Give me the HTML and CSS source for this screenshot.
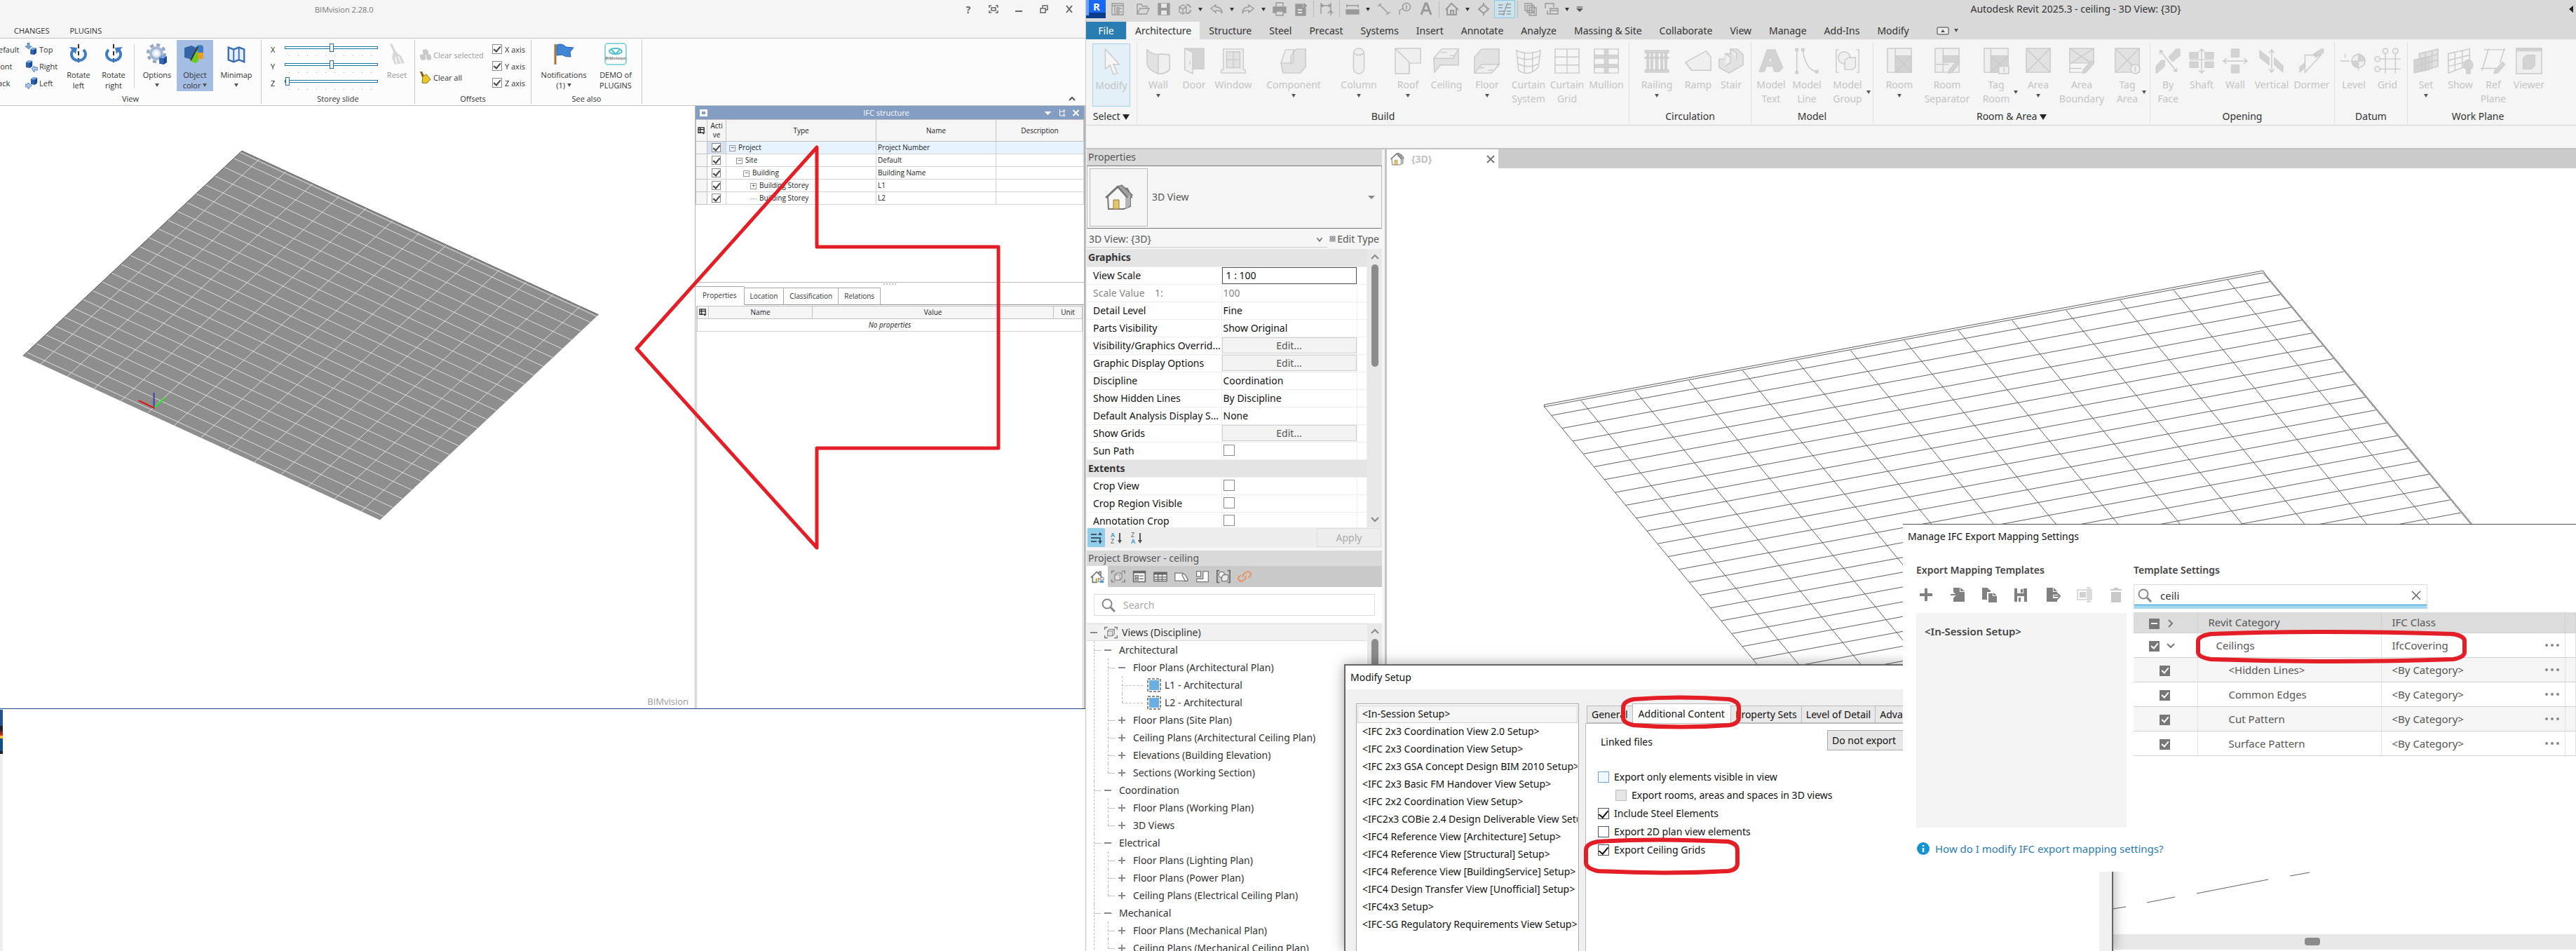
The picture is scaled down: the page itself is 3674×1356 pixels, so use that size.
FILE: index.html
```html
<!DOCTYPE html>
<html lang="en">
<head>
<meta charset="utf-8">
<title>BIMvision and Autodesk Revit</title>
<link rel="stylesheet" href="styles.css">
</head>
<body>
<svg class="sprite" aria-hidden="true">
  <defs>
    <symbol id="house" viewBox="0 0 40 36"><path d="M4 17 18 4l14 2 6 12-2 1v12l-9 4H5z" fill="#f7f7f7" stroke="#777" stroke-width="2"/><path d="M18 3 24 1 39 15l-7 4z" fill="#a0a0a0" stroke="#777" stroke-width="1.5"/><path d="M29 19l7-4v15l-7 5z" fill="#b5b5b5"/><path d="M1 19 18 3l14 16" fill="none" stroke="#777" stroke-width="2.5"/><path d="M12 22h8v13h-8z" fill="#e5c564" stroke="#8b7a45"/></symbol>
    <symbol id="cubeview" viewBox="0 0 28 24"><path d="M1 6V1h6M21 1h6v5M27 18v5h-6M7 23H1v-5" fill="none" stroke="#777" stroke-width="2"/><path d="M7 9l4-4h10v10l-4 4H7z" fill="#e4e4e4" stroke="#777" stroke-width="1.5"/><path d="M7 9h10v10M17 9l4-4" fill="none" stroke="#777"/></symbol>
    <symbol id="magnifier" viewBox="0 0 20 20"><circle cx="8" cy="8" r="6.5" fill="none" stroke="#888" stroke-width="2"/><path d="M13 13l6 6" stroke="#888" stroke-width="3"/></symbol>
    <symbol id="planview" viewBox="0 0 20 20"><path d="M3 3h14v14H3z" fill="#6aafe3"/><path d="M1 1h18v18H1z" fill="none" stroke="#666" stroke-width="1.5" stroke-dasharray="4 2"/></symbol>
    <symbol id="cube" viewBox="0 0 12 14"><path d="M1 4l4-3 6 1v8l-4 3-6-1z" fill="#2f62ad"/><path d="M1 4l4-3 6 1-4 3z" fill="#7aa7e0"/><path d="M7 5l4-3v8l-4 3z" fill="#1e4a8c"/></symbol>
    <symbol id="chooser" viewBox="0 0 12 12"><path d="M1 1h9v8H1zM1 4h9M4 1v8" fill="none" stroke="#222" stroke-width="1.4"/><path d="M6 8h6l-3 4z" fill="#222" stroke="#fff" stroke-width=".5"/></symbol>
  </defs>
</svg>

<main class="desktop">
  <section class="bim" aria-label="BIMvision">
    <header class="bim-title">
      <span class="bim-name">BIMvision 2.28.0</span>
      <div class="win-buttons">
        <button aria-label="Help">?</button>
        <button aria-label="Full screen"><svg viewBox="0 0 14 12"><path d="M1 4V1h3M10 1h3v3M13 8v3h-3M4 11H1V8M4 4h6v4H4z" fill="none" stroke="#666" stroke-width="1.5"/></svg></button>
        <button aria-label="Minimize"><svg viewBox="0 0 14 12"><path d="M2 9h10" stroke="#666" stroke-width="2"/></svg></button>
        <button aria-label="Restore"><svg viewBox="0 0 14 12"><path d="M2 5h7v6H2zM5 4V1h7v6H9" fill="none" stroke="#666" stroke-width="1.5"/></svg></button>
        <button aria-label="Close"><svg viewBox="0 0 14 12"><path d="M3 1l8 10M11 1L3 11" stroke="#666" stroke-width="2"/></svg></button>
      </div>
    </header>
    <nav class="bim-tabs"><a href="#changes">CHANGES</a><a href="#plugins">PLUGINS</a></nav>

    <div class="bim-ribbon">
      <section class="bgroup">
        <div class="bgroup-body view-body">
          <div class="stack clipped"><button>Default</button><button>Front</button><button>Back</button></div>
          <div class="stack">
            <button><svg viewBox="0 0 18 18"><use href="#cube" x="6" y="6" width="11" height="12"/><path d="M3 0h3v5h3L5 9 0 5h3z" fill="#7aa7e0" stroke="#2f62ad" stroke-width=".7"/></svg>Top</button>
            <button><svg viewBox="0 0 18 18"><use href="#cube" x="0" y="0" width="11" height="13"/><path d="M18 11v4h-5v3l-4-5 4-4v2z" fill="#a9c8ee" stroke="#2f62ad" stroke-width=".7"/></svg>Right</button>
            <button><svg viewBox="0 0 18 18"><use href="#cube" x="7" y="0" width="11" height="13"/><path d="M0 11v4h4v3l5-5-5-4v2z" fill="#a9c8ee" stroke="#2f62ad" stroke-width=".7"/></svg>Left</button>
          </div>
          <button class="big"><svg viewBox="0 0 32 32"><path d="M16 2v28" stroke="#333" stroke-width="2" stroke-dasharray="6 4"/><path d="M8 11a10 9 0 1 0 15-1" fill="none" stroke="#3f7cc4" stroke-width="4"/><path d="M3 6l11 1-2 9z" fill="#3f7cc4"/></svg>Rotate<br>left</button>
          <button class="big"><svg viewBox="0 0 32 32"><path d="M16 2v28" stroke="#333" stroke-width="2" stroke-dasharray="6 4"/><path d="M24 11a10 9 0 1 1-15-1" fill="none" stroke="#3f7cc4" stroke-width="4"/><path d="M29 6l-11 1 2 9z" fill="#3f7cc4"/></svg>Rotate<br>right</button>
          <span class="bsep"></span>
          <button class="big wide"><svg viewBox="0 0 32 32"><circle cx="15" cy="15" r="12" fill="none" stroke="#8fa5c0" stroke-width="4" stroke-dasharray="5 4.4"/><circle cx="15" cy="15" r="8" fill="#dfe9f5" stroke="#a3b7d0" stroke-width="4"/><circle cx="15" cy="15" r="3" fill="#fff"/><use href="#cube" x="17" y="17" width="15" height="15"/></svg>Options<i class="caret"></i></button>
          <button class="big active"><svg viewBox="0 0 32 32"><path d="M1 7l10-3 7 3-6 17-11-3z" fill="#3565a8"/><path d="M18 5q5-4 10 0v9H18z" fill="#3f7cc4"/><path d="M18 14h10v8q-5 3-9 0z" fill="#f09a1f"/><path d="M20 10l-11 16 8 3 4-3z" fill="#6ccb1e"/><path d="M20 6L10 25" stroke="#333" stroke-width="2"/></svg>Object<br><span>color <i class="caret"></i></span></button>
          <button class="big wide map"><svg viewBox="0 0 32 32"><path d="M4 7l8 3 8-3 8 3v19l-8-3-8 3-8-3z" fill="#e4eefb" stroke="#3a6db3" stroke-width="2.5"/><path d="M12 10v19M20 7v19" stroke="#3a6db3" stroke-width="2"/></svg>Minimap<i class="caret"></i></button>
        </div>
        <h2>View</h2>
      </section>
      <section class="bgroup">
        <div class="bgroup-body slide-body">
          <div class="sliders">
            <label for="sx">X</label><input id="sx" type="range" value="50">
            <label for="sy">Y</label><input id="sy" type="range" value="50">
            <label for="sz">Z</label><input id="sz" type="range" value="0">
          </div>
          <button class="big dim"><svg viewBox="0 0 32 32"><path d="M6 2l3-1 6 12 8 7 4 9-14 2-4-10 2-8z" fill="#d7d7d7"/><path d="M14 20l2 10M18 19l4 10" stroke="#f4f4f4" stroke-width="2"/></svg>Reset</button>
        </div>
        <h2>Storey slide</h2>
      </section>
      <section class="bgroup">
        <div class="bgroup-body offset-body">
          <div class="stack two">
            <button class="dim"><svg viewBox="0 0 18 18"><path d="M5 2l5-1 3 3v5l-5 1-3-3zM1 9l5-1 3 3v5l-5 1-3-3zM10 9l5-1 2 3v5l-5 1-2-3z" fill="#c9c9c9"/></svg>Clear selected</button>
            <button><svg viewBox="0 0 18 18"><path d="M1 1l3 0 3 6-3 2z" fill="#8a5a1c"/><path d="M5 8l5-3 6 7-6 6-6-1z" fill="#e9c62b" stroke="#8b7410"/></svg>Clear all</button>
          </div>
          <div class="stack axes">
            <label><input type="checkbox" checked>X axis</label>
            <label><input type="checkbox" checked>Y axis</label>
            <label><input type="checkbox" checked>Z axis</label>
          </div>
        </div>
        <h2>Offsets</h2>
      </section>
      <section class="bgroup">
        <div class="bgroup-body also-body">
          <button class="big"><svg viewBox="0 0 32 32"><path d="M4 2v29" stroke="#a8763c" stroke-width="3"/><path d="M6 3q8-3 13 3l11 1-5 6 1 7q-9 0-12-3l-8 1z" fill="#3f86d6" stroke="#2862a5"/></svg>Notifications<br><span>(1) <i class="caret"></i></span></button>
          <button class="big"><svg viewBox="0 0 32 32"><rect x="1" y="1" width="30" height="30" rx="4" fill="#fff" stroke="#67cbd2" stroke-width="1.5"/><ellipse cx="16" cy="12" rx="9" ry="4" fill="none" stroke="#4dbfc8" stroke-width="2"/><path d="M10 10l6 6 6-6" fill="none" stroke="#4dbfc8" stroke-width="2"/><text x="16" y="24" text-anchor="middle" font-size="6" font-weight="700" fill="#777">BIMvision</text></svg>DEMO of<br>PLUGINS</button>
        </div>
        <h2>See also</h2>
      </section>
      <button class="collapse" aria-label="Collapse ribbon"><svg viewBox="0 0 10 8"><path d="M1 6l4-4 4 4" fill="none" stroke="#555" stroke-width="2"/></svg></button>
    </div>

    <div class="bim-main">
      <div class="viewport">
        <svg viewBox="0 151 993 861" preserveAspectRatio="xMinYMin meet" role="img" aria-label="Ceiling model">
          <defs>
            <path id="ra" d="M0 0l509.7 234.2"/>
            <g id="ra4"><use href="#ra"/><use href="#ra" x="-13.44" y="12.6"/><use href="#ra" x="-26.88" y="25.2"/><use href="#ra" x="-40.32" y="37.8"/></g>
            <path id="rb" d="M0 0l-312.9 293.1"/>
            <g id="rb4"><use href="#rb"/><use href="#rb" x="38.2" y="17.5"/><use href="#rb" x="76.4" y="35"/><use href="#rb" x="114.6" y="52.5"/></g>
          </defs>
          <path d="M345.6 215.2L855.3 449.4 543 742.6 32.7 508.3z" fill="#8e8e8e"/>
          <g stroke="#dedede" stroke-width="1">
            <use href="#ra" x="343" y="217.5"/>
            <use href="#ra4" x="334" y="226"/><use href="#ra4" x="280.2" y="276.4"/><use href="#ra4" x="226.5" y="326.8"/><use href="#ra4" x="172.7" y="377.2"/><use href="#ra4" x="119" y="427.6"/>
            <use href="#ra" x="65.2" y="478"/><use href="#ra" x="51.8" y="490.6"/><use href="#ra" x="38.3" y="503.2"/>
            <use href="#rb4" x="370.8" y="227"/><use href="#rb4" x="523.6" y="297"/><use href="#rb4" x="676.4" y="367"/><use href="#rb" x="829.2" y="437"/>
          </g>
          <path d="M32.7 508.3L345.6 215.2 855.3 449.4" fill="none" stroke="#555" stroke-width="1"/>
          <path d="M220 582v-21" stroke="#3d3db0" stroke-width="2"/><path d="M220 582l16-14" stroke="#1fe01f" stroke-width="2"/><path d="M221 583l-23-11" stroke="#e01010" stroke-width="2"/>
        </svg>
        <span class="watermark">BIMvision</span>
      </div>
      <aside class="ifc">
        <header class="ifc-head">
          <svg viewBox="0 0 11 10"><path d="M1.5 1.5h8v7h-8z" fill="none" stroke="#fff" stroke-width="3"/></svg>
          <h2>IFC structure</h2>
          <div><svg viewBox="0 0 10 10"><path d="M0 3h10L5 8z" fill="#fff"/></svg><svg viewBox="0 0 10 10"><path d="M2 0v9h5M2 3h5M7 1v3h2V1zM7 7v3h2V7z" fill="none" stroke="#fff"/></svg><svg viewBox="0 0 10 10"><path d="M1 1l8 8M9 1L1 9" stroke="#fff" stroke-width="2"/></svg></div>
        </header>
        <div class="ifc-tree">
          <table class="grid">
            <colgroup><col class="c-pick"><col class="c-act"><col class="c-type"><col class="c-name"><col></colgroup>
            <thead><tr><th><svg class="chooser"><use href="#chooser"/></svg></th><th>Acti<br>ve</th><th>Type</th><th>Name</th><th>Description</th></tr></thead>
            <tbody>
              <tr class="sel"><th></th><td><input type="checkbox" checked aria-label="Project active"></td><td class="n0"><b class="box">−</b>Project</td><td>Project Number</td><td></td></tr>
              <tr><th></th><td><input type="checkbox" checked aria-label="Site active"></td><td class="n1"><b class="box">−</b>Site</td><td>Default</td><td></td></tr>
              <tr><th></th><td><input type="checkbox" checked aria-label="Building active"></td><td class="n2"><b class="box">−</b>Building</td><td>Building Name</td><td></td></tr>
              <tr><th></th><td><input type="checkbox" checked aria-label="Storey L1 active"></td><td class="n3"><b class="box">+</b>Building Storey</td><td>L1</td><td></td></tr>
              <tr><th></th><td><input type="checkbox" checked aria-label="Storey L2 active"></td><td class="n3"><b class="box none"></b>Building Storey</td><td>L2</td><td></td></tr>
            </tbody>
          </table>
        </div>
        <div class="splitter"><i></i><i></i><i></i><i></i><i></i></div>
        <nav class="ptabs"><button class="on">Properties</button><button>Location</button><button>Classification</button><button>Relations</button></nav>
        <div class="ifc-props">
          <table class="grid">
            <colgroup><col class="c-pick"><col class="c-pname"><col><col class="c-unit"></colgroup>
            <thead><tr><th><svg class="chooser"><use href="#chooser"/></svg></th><th>Name</th><th>Value</th><th>Unit</th></tr></thead>
            <tbody><tr><td colspan="4" class="empty"><em>No properties</em></td></tr></tbody>
          </table>
        </div>
      </aside>
    </div>
    <div class="behind"><i class="s1"></i><i class="s2"></i><i class="s3"></i><i class="s4"></i></div>
  </section>

  <section class="revit" aria-label="Autodesk Revit">
    <header class="qat">
      <svg class="logo" viewBox="0 0 28 26"><path d="M0 0h28v20H0z" fill="#1668f5"/><path d="M0 20l4-2h24v8H0z" fill="#0a3c8c"/><path d="M0 0h4v22H0z" fill="#6aa0ff"/><text x="15" y="15" text-anchor="middle" font-size="15" font-weight="700" fill="#fff">R</text></svg>
      <button aria-label="Home"><svg viewBox="0 0 20 20"><path d="M2 2h16v16H2zM2 5h16M6 5v13M9 8h3v3H9zM9 13h3v3H9zM13 9h3M13 14h3"/></svg></button>
      <span class="gap"></span>
      <button aria-label="Open"><svg viewBox="0 0 20 20"><path d="M2 17V3h6l2 3h6v3M2 17l4-8h13l-4 8z"/></svg></button>
      <button aria-label="Save"><svg viewBox="0 0 20 20"><path class="f" d="M2 2h16v16H2z"/><path class="w" d="M6 2h8v6H6zM6 12h8v6H6z"/></svg></button>
      <button aria-label="Synchronize"><svg viewBox="0 0 20 20"><path d="M2 7l5-3 5 3v7l-5 3-5-3zM2 7l5 3 5-3M7 10v7"/><path d="M12 4a5 5 0 0 1 6 4M18 11a5 5 0 0 1-6 5" stroke-width="2"/></svg></button>
      <i class="caret"></i>
      <button aria-label="Undo"><svg viewBox="0 0 20 20"><path d="M9 4L2 9l7 6v-3q7-1 9 4 0-9-9-9z"/></svg></button>
      <i class="caret"></i>
      <button aria-label="Redo"><svg viewBox="0 0 20 20"><path d="M11 4l7 5-7 6v-3q-7-1-9 4 0-9 9-9z"/></svg></button>
      <i class="caret"></i>
      <button aria-label="Print"><svg viewBox="0 0 20 20"><path d="M5 7V1h10v6M5 13h10v6H5z"/><path class="f" d="M1 7h18v8h-3v-3H4v3H1z"/></svg></button>
      <button aria-label="Export"><svg viewBox="0 0 20 20"><path class="f" d="M3 3h9v5h5v11H3z"/><path d="M9 5h8M14 2l4 3-4 3" stroke-width="2"/><path class="w" d="M6 10h6v2H6zM6 14h6v2H6z"/></svg></button>
      <span class="qsep"></span>
      <button aria-label="Switch"><svg viewBox="0 0 20 20"><path d="M2 1v16M16 1v18M2 5h14M5 3L2 5l3 2M13 3l3 2-3 2M12 16l4-4 3 4"/></svg></button>
      <span class="qsep"></span>
      <button aria-label="Measure"><svg viewBox="0 0 20 20"><path class="f" d="M1 11h18v6H1z"/><path d="M2 3v5M18 3v5M2 5h16"/></svg></button>
      <i class="caret"></i>
      <button aria-label="Aligned dimension"><svg viewBox="0 0 20 20"><path d="M3 3l13 13M1 6l5-4M13 18l6-4"/></svg></button>
      <button aria-label="Tag by category"><svg viewBox="0 0 20 20"><circle cx="12" cy="7" r="5.5"/><path d="M12 4v6M7 9l-5 3M2 11v7"/></svg></button>
      <button aria-label="Text"><svg viewBox="0 0 20 20"><path class="heavy" d="M3 18L9 2h2l6 16M5 12h10"/></svg></button>
      <span class="qsep"></span>
      <button aria-label="Default 3D view"><svg viewBox="0 0 20 20"><path d="M3 9v9h13V9M1 11l8-9 10 9M8 18v-6h4v6" stroke-width="2"/></svg></button>
      <i class="caret"></i>
      <button aria-label="Section"><svg viewBox="0 0 20 20"><path d="M10 1v4M10 15v4M3 10l7-6 7 6-7 6z" stroke-width="2"/></svg></button>
      <button class="lit" aria-label="Thin lines"><svg viewBox="0 0 20 20"><path d="M1 4h7M1 8h6M1 13h8M1 17h9M13 3h6M11 8h8M13 13h6M13 17h6"/><path d="M14 1L8 19"/></svg></button>
      <span class="qsep"></span>
      <button aria-label="Close inactive"><svg viewBox="0 0 20 20"><path d="M2 2h10v10H2zM5 5h10v10H5zM8 8h10v11H8zM10 11l6 6M16 11l-6 6"/></svg></button>
      <button aria-label="Switch windows"><svg viewBox="0 0 20 20"><path d="M1 9V2h12v5M8 9h11v8H8zM8 12h11M4 12v5h3"/></svg></button>
      <i class="caret"></i>
      <button class="thin" aria-label="Customize"><svg viewBox="0 0 20 20"><path d="M3 5h14" stroke-width="2"/><path class="f" d="M3 9h14l-7 7z"/></svg></button>
      <h1>Autodesk Revit 2025.3 - ceiling - 3D View: {3D}</h1>
      <svg class="tri" viewBox="0 0 6 10"><path d="M6 0v10L0 5z" fill="#222"/></svg>
    </header>
    <nav class="rtabs">
      <button class="file">File</button><button class="on">Architecture</button><button>Structure</button><button>Steel</button><button>Precast</button><button>Systems</button><button>Insert</button><button>Annotate</button><button>Analyze</button><button>Massing &amp; Site</button><button>Collaborate</button><button>View</button><button>Manage</button><button>Add-Ins</button><button>Modify</button>
      <button class="cycle" aria-label="Minimize ribbon"><svg viewBox="0 0 18 12"><rect x="1" y="1" width="16" height="10" rx="2" fill="#eee" stroke="#777" stroke-width="1.5"/><path d="M6 8l3-4 3 4z" fill="#555"/></svg><i class="caret"></i></button>
    </nav>
    <div class="ribbon">
      <section class="rgroup g-select"><div class="tools"><button class="tool modify"><svg viewBox="0 0 40 40"><path d="M11 1v30l7-6 5 14 6-2-6-13h9z" fill="#f6f6f6"/></svg>Modify</button></div><h2>Select <i class="caret dark"></i></h2></section>
      <section class="rgroup g-build"><div class="tools">
        <button class="tool"><svg viewBox="0 0 40 40"><path d="M3 3q8 8 17 7 9-1 17 1v22q-8 7-17 6Q5 34 3 24z"/><path class="l" d="M20 10q9-1 17 1v22q-8 7-17 6z"/></svg>Wall<i class="caret"></i></button>
        <button class="tool"><svg viewBox="0 0 40 40"><path class="s" d="M6 1h29v31H17z"/><path class="l" d="M6 1l12 6v32L6 33z"/><path class="n" d="M14 20v5"/></svg>Door</button>
        <button class="tool"><svg viewBox="0 0 40 40"><path class="l" d="M5 2h30v31h3v5H2v-5h3z"/><path d="M10 6h20v24H10zM20 6v24M10 18h20"/></svg>Window</button>
        <button class="tool"><svg viewBox="0 0 40 40"><path class="l" d="M8 3h12l-4 20H1z"/><path d="M1 23h15V12l8-10h14v27l-8 9H4z"/><path class="n" d="M20 3v18l-4 4"/></svg>Component<i class="caret"></i></button>
        <button class="tool"><svg viewBox="0 0 40 40"><rect class="l" x="12" y="1" width="16" height="38" rx="8"/><path class="n" d="M12 8q8 6 16 0"/></svg>Column<i class="caret"></i></button>
        <button class="tool"><svg viewBox="0 0 40 40"><path class="l" d="M1 1h38v22H22v16H1z"/><path class="n" d="M1 1l22 22M22 23v16"/></svg>Roof<i class="caret"></i></button>
        <button class="tool"><svg viewBox="0 0 40 40"><path d="M1 16L13 2h25v24H11L2 37z"/><path class="l" d="M1 16L13 2h25l-8 14zM11 7h10M25 12h8"/></svg>Ceiling</button>
        <button class="tool"><svg viewBox="0 0 40 40"><path d="M1 14L12 2h26v24L26 38H1z"/><path class="l" d="M1 38l11-13h26L27 38zM8 30h8M22 34h7"/></svg>Floor<i class="caret"></i></button>
        <button class="tool"><svg viewBox="0 0 40 40"><path class="n" d="M2 4q17 8 36 0l-3 25q-15 16-30 5zM3 14q17 8 34-2M4 24q16 8 32 0M14 7v31M26 7v29"/></svg>Curtain<br>System</button>
        <button class="tool"><svg viewBox="0 0 40 40"><path class="n" d="M2 2h36v36H2zM2 14h36M2 26h36M20 2v36"/></svg>Curtain<br>Grid</button>
        <button class="tool"><svg viewBox="0 0 40 40"><path class="n" d="M2 2h36v36H2z"/><path class="s" d="M2 11h36v5H2zM2 25h36v5H2zM17 2h6v36h-6z"/></svg>Mullion</button>
      </div><h2>Build</h2></section>
      <section class="rgroup g-circ"><div class="tools">
        <button class="tool"><svg viewBox="0 0 40 40"><path class="s" d="M2 4h36v4H2zM2 33h36v4H2zM2 14h36v2H2zM5 8h3v25H5zM11 8h3v25h-3zM18 8h4v25h-4zM26 8h3v25h-3zM32 8h3v25h-3z"/></svg>Railing<i class="caret"></i></button>
        <button class="tool"><svg viewBox="0 0 40 40"><path class="l" d="M1 22L32 5l7 9v20H10z"/><path class="n" d="M1 22l9 12"/></svg>Ramp</button>
        <button class="tool"><svg viewBox="0 0 40 40"><path d="M2 17h9v-8h8V2h10l9 8v16L17 38 2 30z"/><path class="l" d="M11 9l8 5v8l-8 6M19 2l9 6v10"/></svg>Stair</button>
      </div><h2>Circulation</h2></section>
      <section class="rgroup g-model"><div class="tools">
        <button class="tool"><svg viewBox="0 0 40 40"><path class="s" d="M2 36L14 3h12l12 27-6 6h-7l-3-8h-9l-3 8zM16 21h5l-2-8z"/></svg>Model<br>Text</button>
        <button class="tool"><svg viewBox="0 0 40 40"><path class="n" d="M5 4v32M14 4q4 28 20 32"/><path class="s" d="M3 1h4v4H3zM3 35h4v4H3zM12 1h4v4h-4zM33 34h4v4h-4z"/></svg>Model<br>Line</button>
        <button class="tool"><svg viewBox="0 0 40 40"><path class="n" d="M7 3H3v34h4M33 3h4v34h-4"/><circle class="l" cx="15" cy="15" r="9"/><path class="l" d="M16 19l5-4h11v14l-5 4H16z"/></svg><span class="side">Model<br>Group<i class="caret"></i></span></button>
      </div><h2>Model</h2></section>
      <section class="rgroup g-room"><div class="tools">
        <button class="tool"><svg viewBox="0 0 40 40"><path class="l" d="M2 1h36v36H2z"/><path class="s" d="M14 12h24v25H14z"/><path class="n" d="M14 1v36M14 12l24 25M38 12L14 37"/></svg>Room<i class="caret"></i></button>
        <button class="tool"><svg viewBox="0 0 40 40"><path class="l" d="M2 1h36v36H2z"/><path class="s" d="M14 12h24v10H14zM23 33l12-14 4 4-11 14-6 2z"/><path class="n" d="M14 1v36M2 25h20"/></svg>Room<br>Separator</button>
        <button class="tool"><svg viewBox="0 0 40 40"><path class="l" d="M2 1h36v36H2z"/><path class="s" d="M12 12h26v25H12z"/><path class="n" d="M12 1v36M12 12l26 25M38 12L12 37"/><path class="l" d="M24 28h15v11H24z"/><path class="n" d="M32 30v7"/></svg><span class="side">Tag<br>Room<i class="caret"></i></span></button>
        <button class="tool"><svg viewBox="0 0 40 40"><path d="M2 1h36v36H2zM2 1l36 36M38 1L2 37"/></svg>Area<i class="caret"></i></button>
        <button class="tool"><svg viewBox="0 0 40 40"><path d="M2 1h36v22H2zM2 1l36 25M38 1L2 25"/><path class="n" d="M2 25v12h18M2 31h18"/><path class="s" d="M22 33l13-14 4 4-12 14-6 2z"/></svg>Area<br>Boundary</button>
        <button class="tool"><svg viewBox="0 0 40 40"><path d="M2 1h36v36H2zM2 1l36 36M38 1L2 37"/><circle class="l" cx="32" cy="32" r="7"/><path class="n" d="M32 28v8"/></svg><span class="side">Tag<br>Area<i class="caret"></i></span></button>
      </div><h2>Room &amp; Area <i class="caret dark"></i></h2></section>
      <section class="rgroup g-open"><div class="tools">
        <button class="tool"><svg viewBox="0 0 40 40"><path class="s" d="M21 14L32 2h6v10L27 21zM2 28l8-9h5v9L4 38H2z"/><path class="n" d="M8 4l25 32M8 10V4l5 2M33 30v6l-5-2"/></svg>By<br>Face</button>
        <button class="tool"><svg viewBox="0 0 40 40"><path class="s" d="M2 7h13v9H2zM25 7h13v9H25zM2 21h13v9H2zM25 21h13v9H25z"/><path class="n" d="M20 2v36M16 6l4-4 4 4M16 34l4 4 4-4M2 18h36"/></svg>Shaft</button>
        <button class="tool"><svg viewBox="0 0 40 40"><path class="s" d="M14 2h12v12H14zM14 26h12v12H14z"/><path class="n" d="M2 20h36M7 16l-5 4 5 4M33 16l5 4-5 4"/></svg>Wall</button>
        <button class="tool"><svg viewBox="0 0 40 40"><path class="s" d="M2 4l14 11v11L2 15zM24 15l13 12v10L24 26z"/><path class="n" d="M20 3v34M16 8l4-5 4 5M16 32l4 5 4-5"/></svg>Vertical</button>
        <button class="tool"><svg viewBox="0 0 40 40"><path class="s" d="M22 10L34 2h4v5L26 15zM2 37v-8l7-6v8z"/><path class="n" d="M10 11h24L10 37zM10 11v20"/></svg>Dormer</button>
      </div><h2>Opening</h2></section>
      <section class="rgroup g-datum"><div class="tools">
        <button class="tool"><svg viewBox="0 0 40 40"><path class="n" d="M0 20h14M7 9v6M27 8v26"/><circle class="l" cx="27" cy="20" r="10"/><path class="s" d="M27 10a10 10 0 0 1 10 10H27zM27 20v10a10 10 0 0 1-10-10z"/></svg>Level</button>
        <button class="tool"><svg viewBox="0 0 40 40"><path class="n" d="M17 9v30M32 9v30M8 17h32M8 32h32"/><circle class="l" cx="17" cy="5" r="4"/><circle class="l" cx="32" cy="5" r="4"/><circle class="l" cx="5" cy="17" r="4"/><circle class="l" cx="5" cy="32" r="4"/></svg>Grid</button>
      </div><h2>Datum</h2></section>
      <section class="rgroup g-plane"><div class="tools">
        <button class="tool"><svg viewBox="0 0 40 40"><path d="M10 9l28-7v26l-28 7z"/><path class="s" d="M2 18l24-5v20L2 38z"/><path class="n" d="M10 17l28-7M10 26l28-8M19 7v27M29 5v27M2 28l24-6M14 16v20"/></svg>Set<i class="caret"></i></button>
        <button class="tool"><svg viewBox="0 0 40 40"><path class="n" d="M2 9l32-7v24L2 38zM2 19l32-8M2 28l24-6M12 7v27M23 4v26"/><ellipse class="s" cx="32" cy="26" rx="7" ry="8"/><path class="s" d="M29 34h6v5h-6z"/></svg>Show</button>
        <button class="tool"><svg viewBox="0 0 40 40"><path class="n" d="M6 3h32M1 31h24M13 1L3 35M37 1l-7 22"/><path class="s" d="M22 34l12-13 4 4-11 13-6 1z"/></svg>Ref<br>Plane</button>
        <button class="tool"><svg viewBox="0 0 40 40"><path class="l" d="M1 1h38v38H1z"/><path class="s" d="M1 1h38v4H1zM11 16l5-5h13v16l-5 5H11z"/></svg>Viewer</button>
      </div><h2>Work Plane</h2></section>
    </div>
    <div class="optionsbar"></div>

    <div class="workspace">
      <aside class="dock">
        <h2 class="dock-title">Properties</h2>
        <div class="typebox"><div class="thumb"><svg><use href="#house"/></svg></div><span>3D View</span><i class="caret"></i></div>
        <div class="instance"><div>3D View: {3D}<svg viewBox="0 0 8 6"><path d="M1 1l3 4 3-4" fill="none" stroke="#777" stroke-width="1.5"/></svg></div><button><svg viewBox="0 0 9 9"><path d="M1 1h3v3H1zM5 1h3v3H5zM1 5h3v3H1zM5 5h3v3H5z" fill="#dce9f2" stroke="#777"/></svg>Edit Type</button></div>
        <div class="prop-list">
          <table class="props">
            <colgroup><col class="p-name"><col class="p-val"><col></colgroup>
            <tbody>
              <tr class="cat"><th colspan="3">Graphics</th></tr>
              <tr><th><label for="vs">View Scale</label></th><td class="flush"><input id="vs" type="text" value="1 : 100"></td><td></td></tr>
              <tr class="off"><th>Scale Value &nbsp;&nbsp; 1:</th><td>100</td><td></td></tr>
              <tr><th>Detail Level</th><td>Fine</td><td></td></tr>
              <tr><th>Parts Visibility</th><td>Show Original</td><td></td></tr>
              <tr><th>Visibility/Graphics Overrid...</th><td class="flush"><button>Edit...</button></td><td></td></tr>
              <tr><th>Graphic Display Options</th><td class="flush"><button>Edit...</button></td><td></td></tr>
              <tr><th>Discipline</th><td>Coordination</td><td></td></tr>
              <tr><th>Show Hidden Lines</th><td>By Discipline</td><td></td></tr>
              <tr><th>Default Analysis Display S...</th><td>None</td><td></td></tr>
              <tr><th>Show Grids</th><td class="flush"><button>Edit...</button></td><td></td></tr>
              <tr><th><label for="sun">Sun Path</label></th><td><input id="sun" type="checkbox"></td><td></td></tr>
              <tr class="cat"><th colspan="3">Extents</th></tr>
              <tr><th><label for="cv">Crop View</label></th><td><input id="cv" type="checkbox"></td><td></td></tr>
              <tr><th><label for="cr">Crop Region Visible</label></th><td><input id="cr" type="checkbox"></td><td></td></tr>
              <tr><th><label for="ac">Annotation Crop</label></th><td><input id="ac" type="checkbox"></td><td></td></tr>
            </tbody>
          </table>
          <div class="vbar"><svg viewBox="0 0 12 8"><path d="M1 7l5-5 5 5" fill="none" stroke="#888" stroke-width="2"/></svg><i></i><svg class="down" viewBox="0 0 12 8"><path d="M1 1l5 5 5-5" fill="none" stroke="#888" stroke-width="2"/></svg></div>
        </div>
        <div class="dock-foot">
          <button class="lit" aria-label="Sort by group"><svg viewBox="0 0 18 18"><path d="M1 4h8M1 9h12M1 14h8M14 17V8" fill="none" stroke="#456" stroke-width="2"/><path d="M11 5l3-4 3 4zM11 13l3 4 3-4z" fill="#345"/></svg></button>
          <button aria-label="Sort A to Z"><svg viewBox="0 0 18 18"><text x="0" y="8" font-size="9" font-weight="700" fill="#4a9fd8">A</text><text x="0" y="17" font-size="9" fill="#666">Z</text><path d="M13 2v12" stroke="#555" stroke-width="2"/><path d="M10 12h6l-3 5z" fill="#555"/></svg></button>
          <button aria-label="Sort Z to A"><svg viewBox="0 0 18 18"><text x="0" y="8" font-size="9" fill="#666">Z</text><text x="0" y="17" font-size="9" font-weight="700" fill="#4a9fd8">A</text><path d="M13 2v12" stroke="#555" stroke-width="2"/><path d="M10 12h6l-3 5z" fill="#555"/></svg></button>
          <button class="apply" disabled>Apply</button>
        </div>
        <h2 class="dock-title second">Project Browser - ceiling</h2>
        <div class="browser-tools">
          <button class="on" aria-label="All"><svg viewBox="0 0 24 22"><path d="M4 11v10h8M1 13L11 3l9 9M15 6V3h3v6" fill="none" stroke="#777" stroke-width="2"/><path d="M9 21v-7h3v7z" fill="#c9a94e"/><path d="M14 13v8M14 15h4M14 20h4" stroke="#666"/><path d="M17 13h6v4h-6z" fill="#eee" stroke="#777"/><path d="M17 18h6v4h-6z" fill="#4a9fd8"/></svg></button>
          <button aria-label="Views"><svg viewBox="0 0 28 24"><use href="#cubeview"/></svg></button>
          <button aria-label="Legends"><svg viewBox="0 0 24 22"><path d="M2 2h20v18H2z" fill="#fff" stroke="#666" stroke-width="2"/><path d="M2 4h20" stroke="#666" stroke-width="3"/><path d="M5 9h5v3H5zM5 14h5v3H5zM12 10h7M12 15h7" fill="none" stroke="#666" stroke-width="1.5"/></svg></button>
          <button aria-label="Schedules"><svg viewBox="0 0 24 22"><path d="M1 4h22v15H1z" fill="#f0f0f0"/><path d="M1 4h22v4H1z" fill="#666"/><path d="M1 4h22v15H1zM1 12h22M1 16h22M8 4v15M15 4v15" fill="none" stroke="#666" stroke-width="1.5"/></svg></button>
          <button aria-label="Sheets"><svg viewBox="0 0 24 22"><path d="M1 18V5h13l9 12-1 2z" fill="#fff" stroke="#777" stroke-width="1.5"/><path d="M13 8q3-3 5 0l5 8q-1 4-5 2z" fill="#fff" stroke="#777" stroke-width="1.5"/></svg></button>
          <button aria-label="Families"><svg viewBox="0 0 24 22"><path d="M2 2h7v9H2zM13 2h9v18H2v-5h11z" fill="#fff" stroke="#777" stroke-width="1.5"/></svg></button>
          <button aria-label="Groups"><svg viewBox="0 0 24 22"><path d="M5 1H1v20h4M19 1h4v20h-4" fill="none" stroke="#666" stroke-width="2"/><circle cx="9" cy="8" r="5" fill="#fff" stroke="#777" stroke-width="1.5"/><path d="M9 11l3-3h8v8l-3 3H9z" fill="#e8e8e8" stroke="#777" stroke-width="1.5"/></svg></button>
          <button aria-label="Links"><svg viewBox="0 0 24 22"><path d="M10 12q-2-4 2-6l4-3q4-1 6 2t-1 6l-3 2M13 10q3 4-1 6l-4 3q-4 1-6-2t1-6l3-2" fill="none" stroke="#ec8b4e" stroke-width="2"/></svg></button>
        </div>
        <label class="browser-search"><svg><use href="#magnifier"/></svg><input type="search" placeholder="Search" aria-label="Search the project browser"></label>
        <div class="browser">
          <div class="tree">
            <div class="root"><b class="minus"></b><svg><use href="#cubeview"/></svg>Views (Discipline)</div>
            <ul>
              <li><p><b class="minus"></b>Architectural</p>
                <ul>
                  <li><p><b class="minus"></b>Floor Plans (Architectural Plan)</p>
                    <ul class="leafs"><li><p><svg><use href="#planview"/></svg>L1 - Architectural</p></li><li><p><svg><use href="#planview"/></svg>L2 - Architectural</p></li></ul></li>
                  <li><p><b class="plus"></b>Floor Plans (Site Plan)</p></li>
                  <li><p><b class="plus"></b>Ceiling Plans (Architectural Ceiling Plan)</p></li>
                  <li><p><b class="plus"></b>Elevations (Building Elevation)</p></li>
                  <li><p><b class="plus"></b>Sections (Working Section)</p></li>
                </ul></li>
              <li><p><b class="minus"></b>Coordination</p>
                <ul><li><p><b class="plus"></b>Floor Plans (Working Plan)</p></li><li><p><b class="plus"></b>3D Views</p></li></ul></li>
              <li><p><b class="minus"></b>Electrical</p>
                <ul><li><p><b class="plus"></b>Floor Plans (Lighting Plan)</p></li><li><p><b class="plus"></b>Floor Plans (Power Plan)</p></li><li><p><b class="plus"></b>Ceiling Plans (Electrical Ceiling Plan)</p></li></ul></li>
              <li><p><b class="minus"></b>Mechanical</p>
                <ul><li><p><b class="plus"></b>Floor Plans (Mechanical Plan)</p></li><li><p><b class="plus"></b>Ceiling Plans (Mechanical Ceiling Plan)</p></li></ul></li>
            </ul>
          </div>
          <div class="vbar"><svg viewBox="0 0 12 8"><path d="M1 7l5-5 5 5" fill="none" stroke="#888" stroke-width="2"/></svg><i></i></div>
        </div>
      </aside>

      <div class="canvas">
        <div class="viewtabs"><div class="viewtab"><svg><use href="#house"/></svg><span>{3D}</span><button aria-label="Close view"><svg viewBox="0 0 12 12"><path d="M1 1l10 10M11 1L1 11" stroke="#777" stroke-width="2"/></svg></button></div></div>
        <svg class="scene" viewBox="1978 240 1696 1092" preserveAspectRatio="xMinYMin meet" role="img" aria-label="Ceiling grid in 3D">
          <defs>
            <path id="ca" d="M0 0l1024.3-190.6"/>
            <g id="ca4"><use href="#ca"/><use href="#ca" x="15.12" y="18.3"/><use href="#ca" x="30.24" y="36.6"/><use href="#ca" x="45.36" y="54.9"/></g>
            <path id="cb" d="M0 0l396 480"/>
            <g id="cb4"><use href="#cb"/><use href="#cb" x="76.85" y="-14.33"/><use href="#cb" x="153.7" y="-28.66"/><use href="#cb" x="230.55" y="-43"/></g>
          </defs>
          <g fill="none" stroke="#606060" stroke-width="1">
            <use href="#ca4" x="2213" y="592.3"/><use href="#ca4" x="2273.5" y="665.5"/><use href="#ca4" x="2334" y="738.7"/><use href="#ca4" x="2394.5" y="811.9"/><use href="#ca4" x="2455" y="885.1"/><use href="#ca4" x="2515.5" y="958.3"/>
            <use href="#cb4" x="2255" y="571.3"/><use href="#cb4" x="2562.4" y="514"/><use href="#cb4" x="2869.8" y="456.7"/><use href="#cb" x="3177.2" y="399.3"/>
            <path d="M2600 1061L2202.5 580V577L3227.7 386l4 6 340 411M2202.5 580L3227.7 389l343 415"/>
            <path d="M3013 1296l19-3M3062 1287l40-8M3133 1274l102-20M3266 1249l28-5"/>
          </g>
        </svg>
        <div class="hbar"><i></i></div>
      </div>
    </div>
  </section>

  <section class="dialog setup" role="dialog" aria-label="Modify Setup">
    <h2>Modify Setup</h2>
    <div class="setup-body">
      <ul class="setup-list">
        <li class="on">&lt;In-Session Setup&gt;</li>
        <li>&lt;IFC 2x3 Coordination View 2.0 Setup&gt;</li>
        <li>&lt;IFC 2x3 Coordination View Setup&gt;</li>
        <li>&lt;IFC 2x3 GSA Concept Design BIM 2010 Setup&gt;</li>
        <li>&lt;IFC 2x3 Basic FM Handover View Setup&gt;</li>
        <li>&lt;IFC 2x2 Coordination View Setup&gt;</li>
        <li>&lt;IFC2x3 COBie 2.4 Design Deliverable View Setup&gt;</li>
        <li>&lt;IFC4 Reference View [Architecture] Setup&gt;</li>
        <li>&lt;IFC4 Reference View [Structural] Setup&gt;</li>
        <li>&lt;IFC4 Reference View [BuildingService] Setup&gt;</li>
        <li>&lt;IFC4 Design Transfer View [Unofficial] Setup&gt;</li>
        <li>&lt;IFC4x3 Setup&gt;</li>
        <li>&lt;IFC-SG Regulatory Requirements View Setup&gt;</li>
      </ul>
      <div class="setup-main">
        <nav class="stabs"><button>General</button><button class="on">Additional Content</button><button>Property Sets</button><button>Level of Detail</button><button>Advanced</button></nav>
        <div class="pane">
          <div class="linked"><span>Linked files</span><button>Do not export</button></div>
          <label><input class="hot" type="checkbox">Export only elements visible in view</label>
          <label class="in"><input type="checkbox" disabled>Export rooms, areas and spaces in 3D views</label>
          <label><input type="checkbox" checked>Include Steel Elements</label>
          <label><input type="checkbox">Export 2D plan view elements</label>
          <label><input type="checkbox" checked>Export Ceiling Grids</label>
        </div>
      </div>
    </div>
  </section>

  <section class="dialog mapping" role="dialog" aria-label="Manage IFC Export Mapping Settings">
    <h2>Manage IFC Export Mapping Settings</h2>
    <div class="map-cols">
      <div class="templates">
        <h3>Export Mapping Templates</h3>
        <div class="map-tools">
          <button aria-label="New"><svg viewBox="0 0 22 22"><path d="M11 2v18M2 11h18" stroke="#808080" stroke-width="4"/></svg></button>
          <button aria-label="Import"><svg viewBox="0 0 22 22"><path d="M5 1h9v6h7v14H5v-5l7-5-7-4z" fill="#808080"/><path d="M15 1l6 5h-6z" fill="#808080"/><path d="M1 11h8M6 7l5 4-5 5" fill="none" stroke="#808080" stroke-width="2"/></svg></button>
          <button aria-label="Duplicate"><svg viewBox="0 0 22 22"><path d="M1 1h7l5 4v2H8v11H1zM10 9h6v4h6v9H10zM17 8l5 4h-5z" fill="#808080"/></svg></button>
          <button aria-label="Save"><svg viewBox="0 0 22 22"><path d="M2 2h18v19H2z" fill="#808080"/><path d="M6 2h9v7H6zM6 13h10v8H6z" fill="#fff"/><path d="M11 3h3v5h-3zM8 15h3v6H8z" fill="#808080"/></svg></button>
          <button aria-label="Export"><svg viewBox="0 0 22 22"><path d="M2 1h9v6h6v4h-6v5h6v5H2z" fill="#808080"/><path d="M12 1l5 5h-5z" fill="#808080"/><path d="M12 13h7M17 9l4 4-4 5" fill="none" stroke="#808080" stroke-width="2"/></svg></button>
          <button aria-label="Rename"><svg viewBox="0 0 22 22"><path d="M1 4h14v14H1zM19 4h2v14h-2zM17 1v20M14 1h6M14 21h6" fill="none" stroke="#d0d0d0" stroke-width="1.5"/><path d="M4 7h9v8H4z" fill="#d0d0d0"/></svg></button>
          <button aria-label="Delete"><svg viewBox="0 0 22 22"><path d="M4 7h14v15H4zM3 3h16v2H3zM8 1h6v2H8z" fill="#c8c8c8"/></svg></button>
        </div>
        <ul class="map-list"><li>&lt;In-Session Setup&gt;</li></ul>
      </div>
      <div class="settings">
        <h3><label for="find">Template Settings</label></h3>
        <div class="find"><svg><use href="#magnifier"/></svg><input id="find" type="text" value="ceili"><button aria-label="Clear search"><svg viewBox="0 0 14 14"><path d="M1 1l12 12M13 1L1 13" stroke="#666" stroke-width="1.5"/></svg></button></div>
        <table class="map-table">
          <colgroup><col class="m-check"><col class="m-cat"><col class="m-class"><col></colgroup>
          <thead><tr><th><input class="mixed" type="checkbox" aria-label="All categories"><svg viewBox="0 0 10 12"><path d="M2 1l5 5-5 5" fill="none" stroke="#777" stroke-width="2"/></svg></th><th>Revit Category</th><th>IFC Class</th><th></th></tr></thead>
          <tbody>
            <tr><td><input type="checkbox" checked aria-label="Ceilings"><svg viewBox="0 0 12 10"><path d="M1 2l5 5 5-5" fill="none" stroke="#777" stroke-width="2"/></svg></td><td class="parent">Ceilings</td><td>IfcCovering<button aria-label="Choose class"><i></i><i></i><i></i></button></td><td></td></tr>
            <tr><td class="sub"><input type="checkbox" checked aria-label="Hidden lines"></td><td class="child">&lt;Hidden Lines&gt;</td><td>&lt;By Category&gt;<button aria-label="Choose class"><i></i><i></i><i></i></button></td><td></td></tr>
            <tr><td class="sub"><input type="checkbox" checked aria-label="Common edges"></td><td class="child">Common Edges</td><td>&lt;By Category&gt;<button aria-label="Choose class"><i></i><i></i><i></i></button></td><td></td></tr>
            <tr><td class="sub"><input type="checkbox" checked aria-label="Cut pattern"></td><td class="child">Cut Pattern</td><td>&lt;By Category&gt;<button aria-label="Choose class"><i></i><i></i><i></i></button></td><td></td></tr>
            <tr><td class="sub"><input type="checkbox" checked aria-label="Surface pattern"></td><td class="child">Surface Pattern</td><td>&lt;By Category&gt;<button aria-label="Choose class"><i></i><i></i><i></i></button></td><td></td></tr>
          </tbody>
        </table>
      </div>
    </div>
    <a class="help" href="#help"><svg viewBox="0 0 18 18"><circle cx="9" cy="9" r="9" fill="#1392d4"/><path d="M9 8v6M9 4v2" stroke="#fff" stroke-width="2.5"/></svg>How do I modify IFC export mapping settings?</a>
  </section>

  <svg class="marks" viewBox="0 0 3674 1356" preserveAspectRatio="xMinYMin meet" aria-hidden="true">
    <g fill="none" stroke="#e41e26" stroke-width="5" stroke-linejoin="round">
      <path d="M1165 210V352H1424V639H1165V781L908 497z"/>
      <g stroke-width="6"><path d="M2330 997q65-5 136 0 14 3 14 12v14q0 9-14 11-70 5-136 0-15-3-15-11v-14q0-9 15-12z"/><path d="M2279 1200q80-5 186 0 13 3 13 12v19q0 9-13 11-90 5-186 0-17-4-17-12v-18q0-9 17-12z"/><path d="M3153 904q160-6 346 0 16 3 16 10v16q0 7-16 10-170 6-346 0-18-3-18-10v-16q0-7 18-10z"/></g>
    </g>
  </svg>
</main>
</body>
</html>
```
FILE: styles.css
```css
* { box-sizing: border-box; }
html, body { margin: 0; }
body { font: 14px/20px "Noto Sans", "Open Sans", sans-serif; color: #222; background: #fff; }
h1, h2, h3, p, ul { margin: 0; padding: 0; font: inherit; list-style: none; }
button, input { font: inherit; color: inherit; margin: 0; padding: 0; }
button { background: none; border: 0; white-space: nowrap; }
svg { display: block; flex: none; }
table { border-collapse: collapse; border-spacing: 0; table-layout: fixed; width: 100%; }
th { font-weight: inherit; }
.sprite { position: absolute; width: 0; height: 0; }

.caret { display: inline-block; width: 0; height: 0; border: 3px solid transparent; border-top: 5px solid #555; border-bottom: 0; flex: none; }
.caret.dark { border-width: 5px 5px 0; border-top: 8px solid #222; }

input[type="checkbox"] { appearance: none; display: inline-grid; place-content: center; width: 13px; height: 13px; background: #fff; border: 1px solid #8a8a8a; flex: none; vertical-align: middle; }
input[type="checkbox"]:checked::before { content: ""; width: 4px; height: 8px; border: solid #444; border-width: 0 2px 2px 0; transform: rotate(40deg); margin-top: -2px; }

.desktop { position: relative; display: grid; grid-template-columns: minmax(0, 1548fr) minmax(0, 2126fr); height: 100vh; overflow: hidden; }

/* BIMvision */
.bim { display: flex; flex-direction: column; font-family: "Open Sans", "Noto Sans", sans-serif; font-size: 11px; line-height: 15px; color: #333; min-width: 0; }
.bim-title { display: flex; align-items: center; height: 26px; background: #f5f5f5; color: #777; padding: 0 16px 0 449px; }
.bim-name { flex: 1; }
.win-buttons { display: flex; gap: 22px; font-size: 14px; font-weight: 700; color: #666; }
.win-buttons button { width: 14px; height: 20px; display: grid; place-items: center; }
.win-buttons svg { width: 14px; height: 12px; }
.bim-tabs { display: flex; gap: 29px; height: 29px; padding: 10px 20px 0; background: #f5f5f5; border-bottom: 1px solid #c4c4c4; }
.bim-tabs a { color: #333; text-decoration: none; }
.bim-ribbon { display: flex; height: 96px; background: #fcfcfc; border-bottom: 1px solid #c4c4c4; }
.bgroup { display: flex; flex-direction: column; margin: 2px 0 2px; border-right: 1px solid #c9c9c9; }
.bgroup-body { display: flex; flex: 1; min-height: 0; }
.bgroup h2 { flex: none; height: 15px; text-align: center; }
.view-body { width: 372px; }
.slide-body { width: 218px; padding-left: 9px; }
.offset-body { width: 165px; padding-left: 6px; }
.also-body { width: 157px; padding-left: 9px; }
.stack { display: flex; flex-direction: column; width: 55px; padding: 1px 0 0 4px; }
.stack button, .stack label { display: flex; align-items: center; gap: 2px; height: 24px; white-space: nowrap; }
.stack svg { width: 18px; height: 18px; }
.stack.clipped { width: 32px; padding-left: 0; margin-left: -10px; margin-right: 10px; }
.stack.two { width: 102px; padding: 9px 0 0 0; gap: 8px; }
.stack label { gap: 4px; }
.stack label input { width: 14px; height: 14px; }
.stack.axes { padding-left: 2px; }
.bsep { width: 1px; background: #cfcfcf; margin: 6px 4px 8px; }
.big { display: flex; flex-direction: column; align-items: center; width: 50px; padding-top: 4px; }
.big svg { width: 32px; height: 32px; margin-bottom: 6px; }
.big > .caret { margin-top: 5px; }
.big.wide { width: 56px; }
.big.active { width: 52px; height: 73px; background: #a5bde3; }
.big.map { width: 66px; }
.big.map svg { padding-bottom: 2px; }
.big span .caret { vertical-align: middle; margin-top: -4px; }
.dim { color: #999; }
.also-body .big { width: 76px; }
.sliders { display: grid; grid-template-columns: 20px 133px; grid-auto-rows: 24px; align-items: center; padding: 1px 0 0 4px; width: 159px; }
.sliders input { appearance: none; height: 20px; background: radial-gradient(circle, #aaa 1px, transparent 1px) 0 5px / 13px 30px repeat-x; }
.sliders input::-webkit-slider-runnable-track { height: 4px; background: #fff; border: 1px solid #1d739f; margin-top: -4px; }
.sliders input::-webkit-slider-thumb { appearance: none; width: 6px; height: 12px; margin-top: -5px; background: #fff; border: 1px solid #1d739f; }
.collapse { margin: auto 13px 5px auto; }
.collapse svg { width: 12px; height: 8px; }
.bim-main { display: flex; height: calc(100vh - 496px); border-bottom: 1px solid #1f4a78; }
.viewport { position: relative; flex: 993; min-width: 0; }
.viewport svg { width: 100%; }
.watermark { position: absolute; right: 9px; bottom: 2px; color: #999; font-size: 13px; }
.ifc { flex: 555; min-width: 0; display: flex; flex-direction: column; border: solid #b5b5b5; border-width: 0 2px 0 1px; font-size: 10px; }
.ifc-head { display: flex; align-items: center; height: 19px; padding: 0 6px; background: #849dc3; color: #fff; }
.ifc-head h2 { flex: 1; text-align: center; font-size: 11px; padding-left: 30px; }
.ifc-head svg { width: 11px; height: 10px; }
.ifc-head div { display: flex; gap: 9px; }
.ifc-tree { height: 233px; border-bottom: 1px solid #bbb; }
.grid { line-height: 13px; color: #222; }
.grid th, .grid td { border: 1px solid #d2d2d2; padding: 0 2px; height: 18px; text-align: left; white-space: nowrap; }
.grid th { background: #f5f5f5; text-align: center; border-color: #c2c2c2; }
.ifc-tree thead th { height: 31px; }
.grid input { margin-left: 4px; margin-top: -1px; }
.chooser { width: 11px; height: 11px; margin: auto; }
.c-pick { width: 16px; } .c-act { width: 27px; } .c-type { width: 214px; } .c-name { width: 171px; } .c-pname { width: 148px; } .c-unit { width: 41px; }
.sel td { background: #e7f3fe; }
.sel td:nth-child(2) { background: #d6e0f0; }
.grid .n0 { padding-left: 4px; } .grid .n1 { padding-left: 14px; } .grid .n2 { padding-left: 24px; } .grid .n3 { padding-left: 34px; }
.box { display: inline-block; width: 9px; height: 9px; margin-right: 4px; border: 1px solid #999; line-height: 6px; font-size: 9px; text-align: center; font-weight: 400; vertical-align: middle; }
.box.none { border: 0; height: 0; border-top: 1px dotted #999; }
.splitter { display: flex; justify-content: center; gap: 2px; height: 5px; padding-top: 1px; }
.splitter i { width: 2px; height: 2px; background: #bbb; }
.ptabs { display: flex; align-items: flex-end; height: 27px; border-bottom: 1px solid #999; }
.ptabs button { height: 24px; padding: 0 8px; border: 1px solid #aaa; border-width: 1px 1px 0 0; }
.ptabs .on { height: 27px; padding: 0 10px; background: #fff; border-bottom: 1px solid #fff; margin-bottom: -1px; }
.ifc-props { flex: 1; margin: 1px 1px 0; border: solid #c8c8c8; border-width: 0 1px; }
.grid .empty { text-align: center; }
.empty em { font-style: italic; }
.behind { flex: 1; display: flex; flex-direction: column; width: 4px; padding-top: 1px; background: #eee; }
.s1 { height: 23px; background: #28508c; } .s2 { height: 14px; background: linear-gradient(#222 40%, #e2352a); } .s3 { height: 4px; background: #ffc42e; } .s4 { height: 22px; background: #124f86; border-bottom: 4px solid #222; }

/* Revit frame */
.revit { display: flex; flex-direction: column; min-width: 0; min-height: 0; background: #f5f5f5; border-left: 1px solid #c9c9c9; color: #333; }
.qat { display: flex; align-items: center; height: 31px; padding-bottom: 5px; background: #d9d9d9; }
.qat .logo { width: 28px; height: 26px; margin-right: 2px; }
.qat button { display: grid; place-items: center; width: 30px; height: 26px; }
.qat button svg { width: 20px; height: 20px; fill: none; stroke: #999; stroke-width: 1.4px; }
.qat .f { fill: #999; } .qat .w { fill: #e6e6e6; stroke: none; } .qat .heavy { stroke-width: 3px; }
.qat .thin { width: 20px; } .qat .thin svg { width: 12px; stroke: #555; } .qat .thin .f { fill: #555; }
.qat .gap { width: 6px; }
.qat > .caret { margin: 0 5px 0 4px; border-top-color: #333; }
.qat .qsep { width: 1px; height: 24px; margin: 0 3px; background: #b9b9b9; }
.qat .lit { background: #cbe3ef; border: 1px solid #8cc6e2; }
.qat h1 { flex: 1; text-align: center; padding-right: 6px; }
.qat .tri { width: 6px; height: 10px; margin-right: 4px; }
.rtabs { display: flex; gap: 1px; height: 26px; background: #d9d9d9; border-bottom: 1px solid #eee; }
.rtabs button { padding: 0 12px; height: 25px; }
.rtabs .file { width: 57px; background: #2a7db3; color: #fff; }
.rtabs .on { background: #f5f5f5; }
.rtabs .cycle { display: flex; align-items: center; gap: 7px; padding-left: 26px; }
.rtabs .cycle svg { width: 18px; height: 12px; }
.ribbon { display: flex; height: 121px; padding: 3px 0 2px; }
.rgroup { display: flex; flex-direction: column; border-right: 1px solid #e0e0e0; }
.rgroup:last-child { border: 0; }
.rgroup h2 { height: 20px; text-align: center; }
.tools { display: grid; flex: 1; align-items: start; }
.g-select { width: 73px; } .g-select .tools { grid-template-columns: 54px; justify-content: center; }
.g-build { width: 702px; } .g-build .tools { grid-template-columns: 60px 42px 70px 102px 84px 56px 54px 62px 56px 54px 58px; }
.g-circ { width: 174px; } .g-circ .tools { grid-template-columns: 78px 40px 54px; }
.g-model { width: 174px; } .g-model .tools { grid-template-columns: 56px 46px 70px; }
.g-room { width: 395px; } .g-room .tools { grid-template-columns: 74px 62px 78px 42px 82px 48px; }
.g-open { width: 263px; } .g-open .tools { grid-template-columns: 50px 46px 50px 54px 60px; }
.g-datum { width: 104px; } .g-datum .tools { grid-template-columns: 54px 42px; }
.g-plane { width: 200px; } .g-plane .tools { grid-template-columns: 52px 46px 48px 54px; }
.tool { display: flex; flex-direction: column; align-items: center; padding-top: 7px; color: #c4c4c4; }
.tool svg { width: 38px; height: 40px; margin-bottom: 4px; fill: #e2e2e2; stroke: #cacaca; stroke-width: 1.5px; }
.tool .l { fill: #efefef; } .tool .n { fill: none; } .tool .s { fill: #d3d3d3; stroke: #cacaca; stroke-width: 1px; }
.tool > .caret { margin-top: 3px; }
.side { position: relative; }
.side .caret { position: absolute; right: -12px; top: 18px; }
.modify { height: 90px; margin-top: 2px; padding-top: 5px; background: #e4f0f7; border: 1px solid #a5d2e8; }
.optionsbar { height: 35px; border-top: 1px solid #d4d4d4; border-bottom: 2px solid #c2c2c2; }
.workspace { display: flex; flex: 1; min-height: 0; }

/* docked palettes */
.dock { flex: none; width: 429px; display: flex; flex-direction: column; padding: 0 4px 0 1px; border-right: 3px solid #c4c4c4; }
.dock-title { flex: none; height: 23px; padding: 1px 2px; background: #d9d9d9; color: #555; }
.dock-title.second { height: 22px; margin-top: 4px; }
.typebox { flex: none; display: flex; align-items: center; gap: 6px; height: 90px; padding: 0 9px 0 3px; border: 1px solid #aaa; border-color: #777 #bbb; color: #555; }
.typebox span { flex: 1; }
.typebox .caret { border-width: 5px 5px 0; border-top-color: #888; }
.thumb { display: grid; place-items: center; width: 83px; height: 83px; border: 1px solid #bbb; }
.thumb svg { width: 40px; height: 40px; }
.instance { flex: none; display: flex; height: 29px; color: #555; }
.instance div { display: flex; flex: 1; align-items: center; justify-content: space-between; padding: 4px 6px 0 3px; height: 27px; border-bottom: 1px solid #ccc; }
.instance div svg { width: 10px; height: 7px; }
.instance button { display: flex; align-items: center; gap: 2px; padding: 0 4px 0 3px; }
.instance button svg { width: 9px; height: 9px; }
.prop-list { flex: none; display: flex; height: 397px; overflow: hidden; background: #e8e8e8; }
.props { width: 400px; background: #fff; color: #111; }
.p-name { width: 192px; } .p-val { width: 193px; }
.props tr { height: 25px; }
.props th, .props td { height: 25px; padding: 0 0 0 9px; border: 1px solid #eee; border-left: 0; text-align: left; white-space: nowrap; }
.props td { padding: 0 0 0 2px; }
.props td.flush { padding: 0; }
.props .cat th { padding-left: 2px; background: #e4e4e4; font-weight: 700; color: #333; border: 0; }
.props .off { color: #888; }
.props input[type="text"] { display: block; width: 192px; height: 24px; padding: 0 5px; border: 1px solid #555; background: #fff; }
.props button { display: block; width: 192px; height: 23px; background: #f3f3f3; border: 1px solid #d0d0d0; color: #555; }
.props input[type="checkbox"] { width: 16px; height: 16px; margin-top: -3px; }
.vbar { flex: none; width: 21px; display: flex; flex-direction: column; align-items: center; padding: 7px 0; background: #e8e8e8; }
.vbar svg { width: 12px; height: 8px; }
.vbar i { width: 10px; height: 146px; margin-top: 7px; border-radius: 5px; background: #8c8c8c; }
.vbar .down { margin-top: auto; }
.dock-foot { flex: none; display: flex; gap: 4px; height: 29px; padding: 1px; background: #ededed; }
.dock-foot button { display: grid; place-items: center; width: 25px; height: 27px; }
.dock-foot svg { width: 18px; height: 18px; }
.dock-foot .lit { background: #8fcdea; border-radius: 2px; }
.dock-foot .apply { width: 92px; margin-left: auto; border: 1px solid #ddd; border-radius: 2px; color: #aaa; }
.browser-tools { flex: none; display: flex; height: 30px; background: #c9c9c9; }
.browser-tools button { display: grid; place-items: center; width: 30px; }
.browser-tools .on { background: #fff; }
.browser-tools svg { width: 20px; height: 20px; }
.browser-search { flex: none; display: flex; align-items: center; gap: 11px; height: 31px; padding: 0 10px; border: 1px solid #ddd; background: #fff; outline: 10px solid #fff; margin: 10px 10px 11px; }
.browser-search svg { width: 20px; height: 20px; }
.browser-search input { flex: 1; border: 0; background: none; outline: 0; }
.browser-search input::placeholder { color: #aaa; }
.browser { position: relative; flex: 1; display: flex; min-height: 0; overflow: hidden; background: #fff; }
.tree { flex: 1; }
.root { display: flex; align-items: center; height: 25px; padding-left: 5px; background: #f1f1f1; border: solid #ddd; border-width: 1px 0; }
.root svg { width: 19px; height: 18px; margin: 0 6px 0 10px; }
.tree ul { padding-left: 10px; }
.tree li { position: relative; }
.tree li ul { padding-left: 20px; }
.tree p { display: flex; align-items: center; height: 25px; padding-left: 15px; white-space: nowrap; }
.tree li::before { content: ""; position: absolute; left: 0; top: 0; height: 100%; border-left: 1px dashed #bbb; }
.tree li:last-child::before { height: 13px; }
.tree > ul > li:last-child::before { height: 100%; }
.tree li::after { content: ""; position: absolute; left: 0; top: 13px; width: 10px; border-top: 1px dashed #bbb; }
.tree .leafs li::after { width: 30px; }
.tree .leafs p { padding-left: 36px; }
.leafs svg { width: 20px; height: 20px; margin-right: 5px; }
.minus, .plus { flex: none; width: 10px; height: 10px; background: linear-gradient(#888, #888) 0 50% / 10px 2px no-repeat; }
.plus { background: linear-gradient(#888, #888) 0 50% / 10px 2px no-repeat, linear-gradient(#888, #888) 50% 0 / 2px 10px no-repeat; }
.tree li .minus, .tree li .plus { margin-right: 11px; }

/* 3D view */
.canvas { flex: 1; display: flex; flex-direction: column; min-width: 0; background: #fff; }
.viewtabs { flex: none; height: 27px; background: #cbcbcb; }
.viewtab { display: flex; align-items: center; gap: 10px; width: 159px; height: 27px; padding: 0 5px; background: #fff; font-weight: 600; color: #bbb; }
.viewtab > svg { width: 20px; height: 19px; }
.viewtab span { flex: 1; }
.viewtab button svg { width: 12px; height: 12px; }
.scene { flex: 1; width: 100%; min-height: 0; }
.hbar { flex: none; height: 24px; padding: 5px 0 0 1309px; background: #e8e8e8; border-bottom: 2px solid #fff; }
.hbar i { display: block; width: 22px; height: 11px; border-radius: 4px; background: #8c8c8c; }

/* dialogs */
.dialog { position: absolute; }
.setup { left: 1917px; top: 947px; bottom: 0; width: 1097px; display: flex; flex-direction: column; background: #f0f0f0; border: 2px solid #666; border-bottom: 0; box-shadow: 0 0 18px rgba(0, 0, 0, .35); color: #111; }
.setup h2 { flex: none; height: 34px; padding: 7px; background: #fff; }
.setup-body { flex: 1; display: flex; gap: 9px; padding: 20px 18px 0 15px; min-height: 0; }
.setup-list { flex: none; width: 318px; padding: 2px 1px; overflow: hidden; background: #fff; border: 1px solid #aaa; border-bottom: 0; }
.setup-list li { height: 25px; padding: 2px 7px; white-space: nowrap; overflow: hidden; }
.setup-list .on { background: #f5f5f5; border: 1px solid #d0d0d0; padding: 1px 6px; }
.setup-main { flex: 1; display: flex; flex-direction: column; }
.stabs { display: flex; align-items: flex-end; height: 28px; padding-left: 2px; }
.stabs button { height: 25px; padding: 0 6px; background: #e9e9e9; border: 1px solid #bbb; border-right-width: 0; }
.stabs .on { height: 28px; padding: 0 8px; background: #fff; border-bottom: 0; }
.pane { flex: 1; padding-left: 17px; background: #fff; border: 1px solid #bbb; border-width: 1px 0 0 1px; }
.linked { display: flex; height: 63px; padding: 9px 200px 0 4px; align-items: flex-start; }
.linked span { flex: none; width: 323px; padding-top: 7px; }
.linked button { width: 180px; height: 29px; padding-left: 6px; text-align: left; background: #e6e6e6; border: 1px solid #aaa; }
.pane label { display: flex; align-items: center; gap: 7px; height: 26px; }
.pane label.in { padding-left: 25px; }
.pane input { width: 16px; height: 16px; border-color: #555; }
.pane .hot { background: #f0f7ff; border-color: #6fa3e0; }
.pane input:disabled { background: #e6e6e6; border-color: #bbb; }
.pane input[type="checkbox"]:checked::before { width: 6px; height: 11px; border-color: #111; }

.mapping { left: 2714px; top: 747px; right: 0; height: 496px; background: #fff; border-top: 1px solid #555; font-size: 15px; color: #555; }
.mapping h2 { height: 50px; padding: 7px; color: #111; font-size: 14px; }
.mapping h3 { height: 30px; padding-top: 5px; font-weight: 600; font-size: 14px; color: #444; }
.map-cols { display: flex; gap: 10px; padding-left: 19px; }
.templates { flex: none; width: 300px; }
.map-tools { display: flex; justify-content: space-between; align-items: flex-start; height: 46px; padding: 9px 4px 0 3px; }
.map-tools svg { width: 22px; height: 22px; }
.map-list { height: 306px; padding: 16px 12px; background: #f4f4f4; font-weight: 600; color: #444; }
.settings { flex: 1; min-width: 0; }
.find { display: flex; align-items: center; gap: 12px; width: 419px; height: 35px; margin: 5px 0; padding: 0 8px 0 5px; border: 1px solid #ddd; border-bottom: 5px solid #a5d9f0; box-shadow: inset 0 -1px #1c94cf; }
.find svg { width: 20px; height: 20px; }
.find input { flex: 1; border: 0; outline: 0; background: none; color: #333; }
.find button svg { width: 14px; height: 14px; }
.m-check { width: 91px; } .m-cat { width: 262px; } .m-class { width: 262px; }
.map-table th, .map-table td { height: 35px; padding: 0 0 0 15px; text-align: left; border-right: 1px solid #e2e2e2; border-bottom: 1px solid #d0d0d0; }
.map-table th { height: 29px; background: #dcdcdc; border-color: #cfcfcf; }
.map-table th:first-child, .map-table td:first-child { padding-left: 22px; }
.map-table td.sub { padding-left: 37px; }
.map-table .parent { padding-left: 26px; }
.map-table .child { padding-left: 44px; }
.map-table tr:nth-child(even) td { background: #f5f5f5; }
.map-table input { width: 15px; height: 15px; background: #777; border: 0; }
.map-table input[type="checkbox"]:checked::before { border-color: #fff; }
.map-table .mixed::before { content: ""; width: 9px; height: 2px; background: #fff; }
.map-table svg { display: inline-block; width: 12px; height: 12px; margin-left: 10px; vertical-align: middle; }
.map-table button { float: right; display: flex; gap: 4px; height: 20px; align-items: center; margin-right: 8px; }
.map-table button i { width: 4px; height: 4px; border-radius: 2px; background: #888; }
.help { display: flex; align-items: center; gap: 8px; margin: 20px 0 0 20px; color: #2a7db3; text-decoration: none; }
.help svg { width: 18px; height: 18px; }

.marks { position: absolute; left: 0; top: 0; width: 100%; pointer-events: none; }
```
